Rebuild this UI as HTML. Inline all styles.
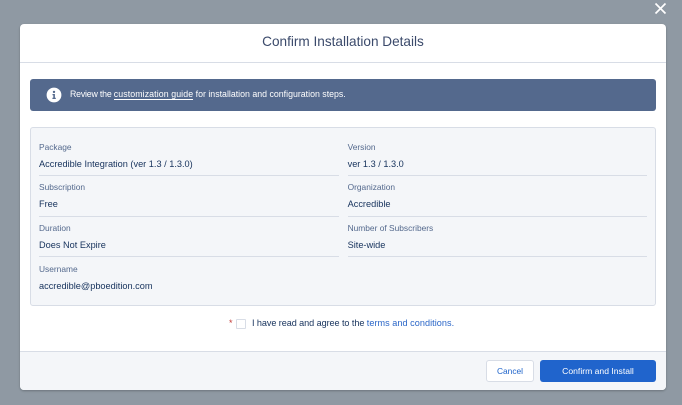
<!DOCTYPE html>
<html>
<head>
<meta charset="utf-8">
<style>
html,body{margin:0;padding:0;}
body{width:682px;height:405px;overflow:hidden;position:relative;background:#8f99a3;font-family:"Liberation Sans",sans-serif;color:#16325c;}
.a{position:absolute;white-space:nowrap;}
.modal{left:20px;top:24px;width:646px;height:366px;background:#fff;border-radius:4px;box-shadow:0 1px 2px rgba(0,0,0,.25);overflow:hidden;}
.hline{height:1px;background:#d8dde6;}
.lab{font-size:8.4px;line-height:12px;color:#54698d;}
.val{font-size:9.2px;line-height:12px;color:#16325c;}
</style>
</head>
<body>
<svg class="a" style="left:654px;top:2px" width="13" height="13" viewBox="0 0 13 13"><path d="M1.5 1.5 L11.5 11.5 M11.5 1.5 L1.5 11.5" stroke="#fff" stroke-width="1.7" fill="none"/></svg>

<div class="a modal"></div>
<div class="a" style="left:20px;top:32px;width:646px;text-align:center;font-size:13.6px;line-height:20px;color:#3b4a6b;">Confirm Installation Details</div>
<div class="a hline" style="left:20px;top:62px;width:646px;"></div>

<div class="a" style="left:30px;top:79px;width:626px;height:32px;background:#54698d;border-radius:3px;"></div>
<svg class="a" style="left:46px;top:87px" width="16" height="16" viewBox="0 0 16 16"><circle cx="8" cy="8" r="7.4" fill="#fff"/><circle cx="8" cy="4.9" r="1.2" fill="#54698d"/><path d="M6.5 7 H8.9 V10.8 H9.8 V12 H6.4 V10.8 H7.3 V8.2 H6.5 Z" fill="#54698d"/></svg>
<div class="a" style="left:70px;top:88px;font-size:8.8px;line-height:13px;color:#fff;"><span style="letter-spacing:-.2px;">Review the </span><span style="border-bottom:1px solid #fff;letter-spacing:.01em;">customization guide</span> for installation and configuration steps.</div>

<div class="a" style="left:30px;top:127px;width:624px;height:177px;background:#f4f6f9;border:1px solid #d8dde6;border-radius:3px;"></div>

<div class="a lab" style="left:39px;top:141px;">Package</div>
<div class="a val" style="left:39px;top:158px;">Accredible Integration (ver 1.3 / 1.3.0)</div>
<div class="a hline" style="left:39px;top:175px;width:300px;"></div>
<div class="a lab" style="left:39px;top:181px;">Subscription</div>
<div class="a val" style="left:39px;top:198px;">Free</div>
<div class="a hline" style="left:39px;top:216px;width:300px;"></div>
<div class="a lab" style="left:39px;top:222px;">Duration</div>
<div class="a val" style="left:39px;top:239px;">Does Not Expire</div>
<div class="a hline" style="left:39px;top:256px;width:300px;"></div>
<div class="a lab" style="left:39px;top:263px;">Username</div>
<div class="a val" style="left:39px;top:280px;">accredible@pboedition.com</div>

<div class="a lab" style="left:347.6px;top:141px;">Version</div>
<div class="a val" style="left:347.6px;top:158px;">ver 1.3 / 1.3.0</div>
<div class="a hline" style="left:348px;top:175px;width:299px;"></div>
<div class="a lab" style="left:347.6px;top:181px;">Organization</div>
<div class="a val" style="left:347.6px;top:198px;">Accredible</div>
<div class="a hline" style="left:348px;top:216px;width:299px;"></div>
<div class="a lab" style="left:347.6px;top:222px;">Number of Subscribers</div>
<div class="a val" style="left:347.6px;top:239px;">Site-wide</div>
<div class="a hline" style="left:348px;top:256px;width:299px;"></div>

<div class="a" style="left:229px;top:317px;font-size:9px;line-height:12px;color:#c23934;">*</div>
<div class="a" style="left:236px;top:319px;width:8px;height:8px;border:1px solid #d8dde6;border-radius:1px;background:#fff;"></div>
<div class="a" style="left:252px;top:317px;font-size:9.1px;line-height:12px;color:#16325c;"><span style="letter-spacing:-.07px;">I have read and agree to the </span><span style="color:#2a66c8;letter-spacing:.005em;">terms and conditions.</span></div>

<div class="a" style="left:20px;top:351px;width:646px;height:39px;background:#f4f6f9;border-top:1px solid #d8dde6;border-radius:0 0 4px 4px;box-sizing:border-box;"></div>

<div class="a" style="left:486px;top:360px;width:46px;height:20px;background:#fff;border:1px solid #d8dde6;border-radius:3px;text-align:center;font-size:8.4px;line-height:21px;color:#2065cb;">Cancel</div>
<div class="a" style="left:540px;top:360px;width:116px;height:22px;background:#2064cc;border-radius:3px;text-align:center;font-size:8.6px;line-height:22px;color:#fff;">Confirm and Install</div>
</body>
</html>
